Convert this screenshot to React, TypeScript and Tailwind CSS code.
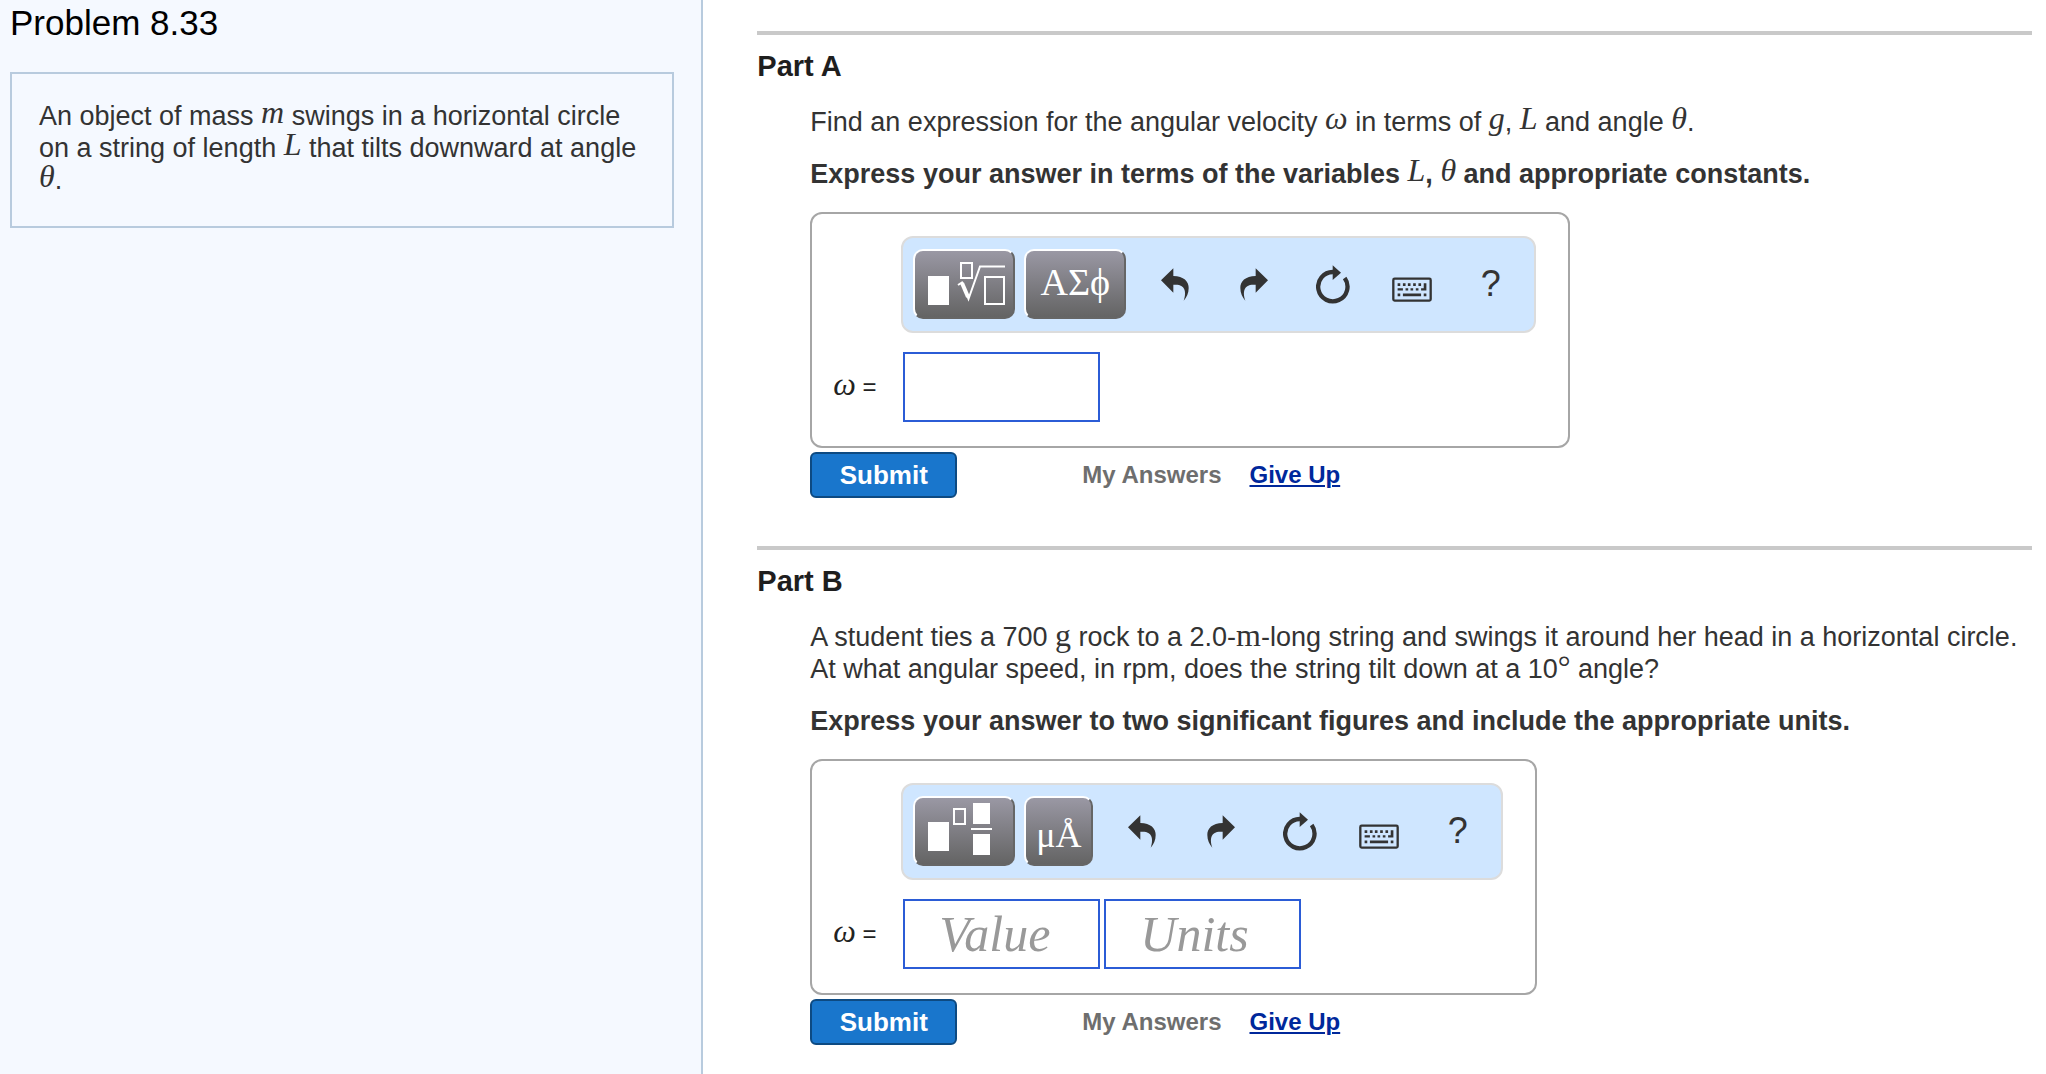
import React from "react"

type ChildrenProps = { children: React.ReactNode }

const Var = ({ children }: ChildrenProps) => (
  <i className="font-['Liberation_Serif',serif] text-[32px] leading-0 font-normal align-[2px]">
    {children}
  </i>
)

const Unit = ({ children }: ChildrenProps) => (
  <span className="font-['Liberation_Serif',serif] text-[32px] leading-0">{children}</span>
)

const UndoIcon = ({ flip = false }: { flip?: boolean }) => (
  <svg width="28" height="33" viewBox="97 184 84 99" fill="#333" aria-hidden="true">
    <path
      transform={flip ? "translate(278 0) scale(-1 1)" : undefined}
      d="M97 221 L134 185 V208 C165 208 181 225 180 244 C180 260 174 272 165 282 C172 262 172 240 151 235 C145 233.500 140 234 134 234 V258 Z"
    />
  </svg>
)

const ResetIcon = () => (
  <svg width="34" height="39" viewBox="560 176 102 117" aria-hidden="true">
    <path d="M646 215 A44 44 0 1 1 611 197" fill="none" stroke="#333" strokeWidth="13" />
    <path d="M610 177 L635 199 L610 221 Z" fill="#333" />
  </svg>
)

const KeyboardIcon = () => (
  <svg width="40" height="35" viewBox="784 181 121 105" fill="#333" aria-hidden="true">
    <rect x="788" y="216" width="113" height="66" rx="4" fill="none" stroke="#333" strokeWidth="7" />
    <path d="M801 230h8v8h-8z M817 230h8v8h-8z M832 230h8v8h-8z M848 230h8v8h-8z M864 230h8v8h-8z" />
    <path d="M801 245h16v7h-16z M825 245h8v7h-8z M840 245h8v7h-8z M856 245h8v7h-8z" />
    <path d="M880 230h8v22h-16v-7h8z" />
    <path d="M801 261h8v8h-8z M817 261h55v8h-55z M880 261h8v8h-8z" />
  </svg>
)

const RootTemplateIcon = () => (
  <svg width="98" height="66" viewBox="2 2 98 66" fill="none" stroke="#fff" strokeWidth="2" aria-hidden="true">
    <rect x="15" y="27" width="21" height="29" fill="#fff" stroke="none" />
    <rect x="48" y="14" width="11" height="15" />
    <path d="M45 36 L49 33.500 L55.500 50 L67 17.500 H92" />
    <path d="M49 34 L55 48" strokeWidth="4" />
    <rect x="72" y="28" width="19" height="27" />
  </svg>
)

const FractionTemplateIcon = () => (
  <svg width="98" height="66" viewBox="2 2 98 66" fill="#fff" aria-hidden="true">
    <rect x="15" y="26" width="21" height="29" />
    <rect x="41" y="13" width="11" height="15" fill="none" stroke="#fff" strokeWidth="2" />
    <rect x="60" y="7" width="17" height="21" />
    <rect x="58" y="32" width="21" height="2" />
    <rect x="60" y="38" width="17" height="21" />
  </svg>
)

const PaletteButton = ({ label, children }: ChildrenProps & { label: string }) => (
  <button
    type="button"
    aria-label={label}
    className="flex h-[70px] items-center justify-center rounded-[10px] border-2 border-t-white border-l-white border-r-[#666] border-b-[#666] bg-linear-to-b from-[#9a98a4] to-[#646464] font-['Liberation_Serif',serif] text-4xl text-white"
  >
    {children}
  </button>
)

const ToolButton = ({ label, children }: ChildrenProps & { label: string }) => (
  <button type="button" aria-label={label} className="flex h-[70px] w-[79px] items-center justify-center">
    {children}
  </button>
)

const Toolbar = ({ children }: ChildrenProps) => (
  <div className="flex rounded-xl border-2 border-[#dcdcdc] bg-[#cfe6ff] pt-[11px] pr-1 pb-3 pl-[10px]">
    <div className="mr-[9px] flex gap-[9px]">{children}</div>
    <ToolButton label="Undo">
      <UndoIcon />
    </ToolButton>
    <ToolButton label="Redo">
      <UndoIcon flip />
    </ToolButton>
    <ToolButton label="Reset">
      <ResetIcon />
    </ToolButton>
    <ToolButton label="Keyboard shortcuts">
      <KeyboardIcon />
    </ToolButton>
    <ToolButton label="Help">
      <span className="text-4xl text-[#333]">?</span>
    </ToolButton>
  </div>
)

const AnswerInput = ({ id, label, placeholder }: { id: string; label?: string; placeholder?: string }) => (
  <input
    id={id}
    type="text"
    aria-label={label}
    placeholder={placeholder}
    className="h-[70px] w-[197px] border-2 border-[#2b5cd6] bg-white pl-[34px] font-['Liberation_Serif',serif] text-[50px] text-[#333] placeholder:text-[#999] placeholder:italic"
  />
)

type AnswerBoxProps = {
  inputId: string
  palette: React.ReactNode
  inputs: React.ReactNode
}

const AnswerBox = ({ inputId, palette, inputs }: AnswerBoxProps) => (
  <form onSubmit={(e) => e.preventDefault()}>
    <div className="mt-[22px] grid w-fit grid-cols-[68px_auto] items-center gap-y-[19px] rounded-xl border-2 border-[#a6a6a6] pt-[22px] pr-8 pb-6 pl-[21px]">
      <div className="col-start-2">
        <Toolbar>{palette}</Toolbar>
      </div>
      <label htmlFor={inputId} className="text-2xl whitespace-nowrap text-[#222]">
        <i className="font-['Liberation_Serif',serif] text-[32px] leading-0">ω</i> =
      </label>
      <div className="ml-0.5 flex gap-1">{inputs}</div>
    </div>
    <div className="mt-1 flex items-center text-2xl font-bold">
      <button
        type="submit"
        className="h-[46px] w-[147px] rounded-md border-2 border-[#0d4a82] bg-[#1976cc] text-[26px] text-white"
      >
        Submit
      </button>
      <span className="ml-[125px] text-[#6e6e6e]">My Answers</span>
      <a href="#" className="ml-7 text-[#00289b] underline decoration-2 underline-offset-2">
        Give Up
      </a>
    </div>
  </form>
)

const Part = ({ title, children }: ChildrenProps & { title: string }) => (
  <section className="border-t-4 border-[#c9c9c9]">
    <h2 className="mt-[15px] text-[29px] leading-8 font-bold text-[#1e1e1e]">{title}</h2>
    <div className="mt-6 pl-[53px] text-[27px] leading-8">{children}</div>
  </section>
)

const App = () => {
  return (
    <div className="grid min-h-screen grid-cols-[11fr_21fr] bg-white font-['Liberation_Sans',Arial,sans-serif] text-[#333]">
      <aside className="border-r-2 border-[#b8cbde] bg-[#f5f9ff] pt-[3px] pr-[27px] pl-[10px]">
        <h1 className="text-[35px] leading-10 text-black">Problem 8.33</h1>
        <div className="mt-[29px] border-2 border-[#b8cbde] px-[27px] pt-[26px] pb-[30px] text-[27px] leading-8">
          An object of mass <Var>m</Var> swings in a horizontal circle on a string of length <Var>L</Var> that
          tilts downward at angle <Var>θ</Var>.
        </div>
      </aside>
      <main className="flex flex-col gap-12 pt-[31px] pr-[14px] pl-[54px]">
        <Part title="Part A">
          <p>
            Find an expression for the angular velocity <Var>ω</Var> in terms of <Var>g</Var>, <Var>L</Var> and
            angle <Var>θ</Var>.
          </p>
          <p className="mt-5 font-bold">
            Express your answer in terms of the variables <Var>L</Var>, <Var>θ</Var> and appropriate constants.
          </p>
          <AnswerBox
            inputId="answer-a"
            palette={
              <>
                <PaletteButton label="Templates">
                  <RootTemplateIcon />
                </PaletteButton>
                <PaletteButton label="Symbols">
                  <span className="w-[98px] pb-1 text-[38px]">ΑΣϕ</span>
                </PaletteButton>
              </>
            }
            inputs={<AnswerInput id="answer-a" />}
          />
        </Part>
        <Part title="Part B">
          <p>
            A student ties a 700 <Unit>g</Unit> rock to a 2.0-<Unit>m</Unit>-long string and swings it around her
            head in a horizontal circle. At what angular speed, in rpm, does the string tilt down at a 10
            <Unit>°</Unit> angle?
          </p>
          <p className="mt-5 font-bold">
            Express your answer to two significant figures and include the appropriate units.
          </p>
          <AnswerBox
            inputId="answer-b"
            palette={
              <>
                <PaletteButton label="Templates">
                  <FractionTemplateIcon />
                </PaletteButton>
                <PaletteButton label="Units">
                  <span className="w-[65px] pt-2">μÅ</span>
                </PaletteButton>
              </>
            }
            inputs={
              <>
                <AnswerInput id="answer-b" placeholder="Value" />
                <AnswerInput id="answer-b-units" label="Units" placeholder="Units" />
              </>
            }
          />
        </Part>
      </main>
    </div>
  )
}

export default App
